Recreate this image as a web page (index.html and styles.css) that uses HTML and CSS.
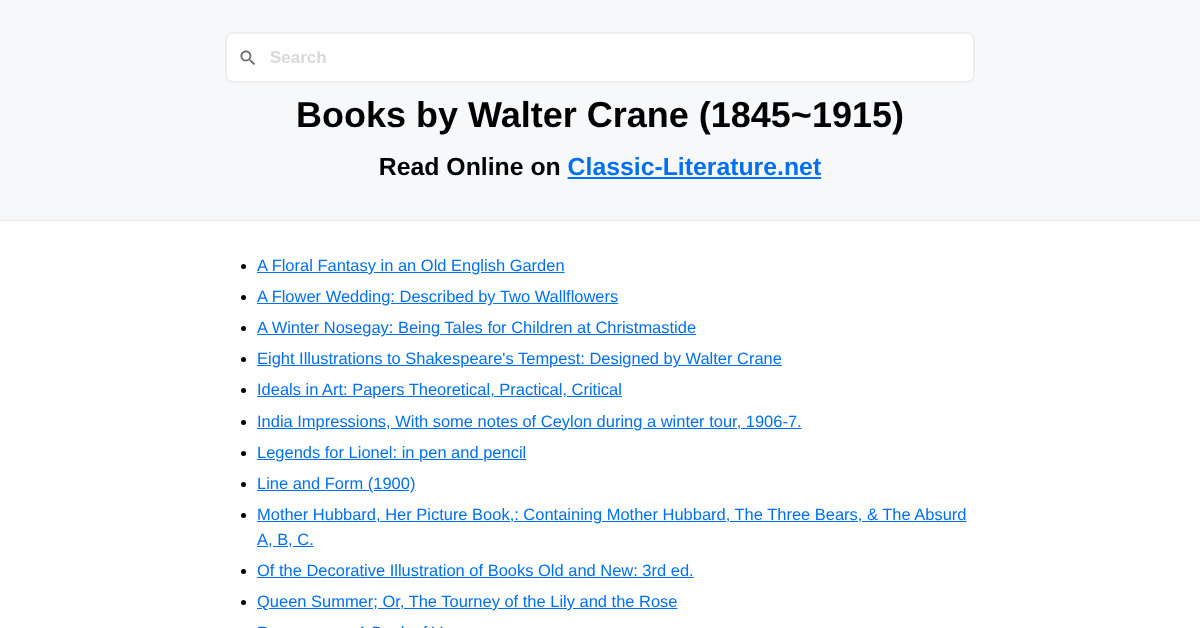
FILE: index.html
```html
<!DOCTYPE html>
<html lang="en">
<head>
    <meta charset="UTF-8" />
    <title>Books by Walter Crane (1845~1915)</title>
    <link rel="stylesheet" href="styles.css">
</head>
<body>
    <header class="hero">
        <div class="container">
            <div class="search-box">
                <svg class="search-icon" xmlns="http://www.w3.org/2000/svg" viewBox="0 0 24 24" width="20" height="20">
                    <path d="M15.5 14h-.79l-.28-.27C15.41 12.59 16 11.11 16 9.5 16 5.91 13.09 3 9.5 3S3 5.91 3 9.5 5.91 16 9.5 16c1.61 0 3.09-.59 4.23-1.57l.27.28v.79l5 4.99L20.49 19l-4.99-5zm-6 0C7.01 14 5 11.99 5 9.5S7.01 5 9.5 5 14 7.01 14 9.5 11.99 14 9.5 14z"/>
                </svg>
                <input type="text" class="search-input" placeholder="Search" />
            </div>
            <h1>Books by Walter Crane (1845~1915)</h1>
            <h2>Read Online on <a href="#">Classic-Literature.net</a></h2>
        </div>
    </header>
    <main class="container">
        <ul class="book-list">
            <li><a href="#">A Floral Fantasy in an Old English Garden</a></li>
            <li><a href="#">A Flower Wedding: Described by Two Wallflowers</a></li>
            <li><a href="#">A Winter Nosegay: Being Tales for Children at Christmastide</a></li>
            <li><a href="#">Eight Illustrations to Shakespeare's Tempest: Designed by Walter Crane</a></li>
            <li><a href="#">Ideals in Art: Papers Theoretical, Practical, Critical</a></li>
            <li><a href="#">India Impressions, With some notes of Ceylon during a winter tour, 1906-7.</a></li>
            <li><a href="#">Legends for Lionel: in pen and pencil</a></li>
            <li><a href="#">Line and Form (1900)</a></li>
            <li><a href="#">Mother Hubbard, Her Picture Book,: Containing Mother Hubbard, The Three Bears, &amp; The Absurd A, B, C.</a></li>
            <li><a href="#">Of the Decorative Illustration of Books Old and New: 3rd ed.</a></li>
            <li><a href="#">Queen Summer; Or, The Tourney of the Lily and the Rose</a></li>
            <li><a href="#">Renascence: A Book of Verse</a></li>
        </ul>
    </main>
</body>
</html>
```
FILE: styles.css
```css
html, body {
    height: 628px;
    overflow: hidden;
}
body {
    font-family: "Liberation Sans", Arial, sans-serif;
    margin: 0;
    padding: 0;
    background: #fff;
    color: #000;
    text-rendering: geometricPrecision;
    will-change: transform;
}
.container {
    width: 750px;
    margin: 0 auto;
}
.hero {
    background: #f7f8fa;
    border-bottom: 1px solid #e6e8eb;
    padding: 32px 0 24px;
    height: 164px;
}
.search-box {
    display: flex;
    align-items: center;
    height: 51px;
    box-sizing: border-box;
    background: #fff;
    border: 2px solid #eeeeee;
    border-radius: 8px;
    padding: 0 11px;
    gap: 12px;
}
.search-icon {
    fill: #666;
    flex-shrink: 0;
}
.search-input {
    flex-grow: 1;
    border: none;
    outline: none;
    background: transparent;
    font-family: inherit;
    font-size: 17px;
    font-weight: 700;
    padding: 1px 0;
}
.search-input::placeholder {
    color: #d9d9d9;
}
h1 {
    font-size: 36px;
    line-height: 43px;
    font-weight: 700;
    text-align: center;
    margin: 10px 0 0;
}
h2 {
    font-size: 24.8px;
    line-height: 30px;
    font-weight: 700;
    text-align: center;
    margin: 17px 0 0;
}
a {
    color: #0070f3;
}
.book-list {
    margin: 33px 0 0;
    padding: 0 0 0 32px;
    font-size: 16.48px;
    line-height: 24.72px;
}
.book-list li {
    margin-bottom: 6.4px;
}
```
